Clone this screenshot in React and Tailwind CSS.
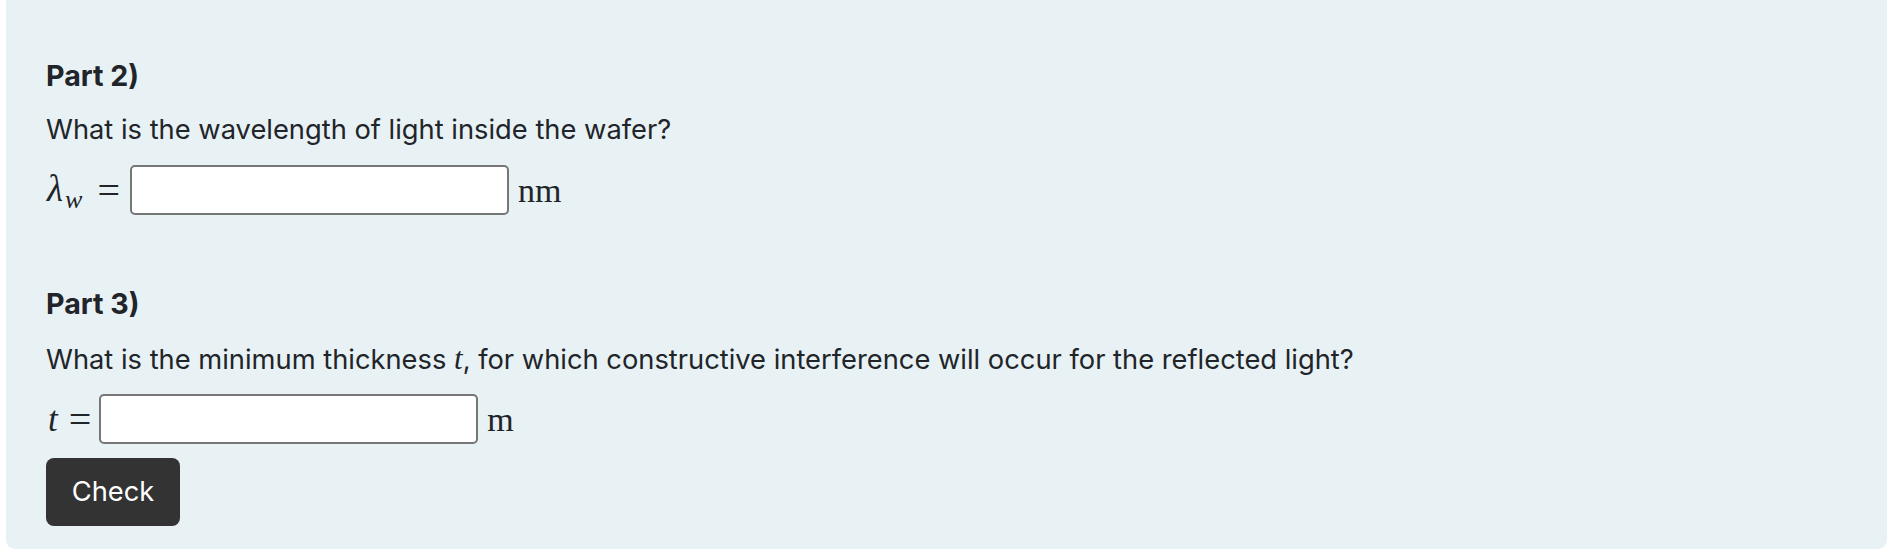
import React from 'react';

const math = "font-['Liberation_Serif',serif]";

function AnswerRow({ children, unit, className = '' }) {
    return (
        <div className={`flex items-center ${className}`}>
            {children}
            <input
                type="text"
                className="h-[50px] w-[379px] rounded-[5px] border-2 border-[#767676] bg-white px-3 text-[28px] outline-none"
            />
            <span className={`${math} ml-[9px] pt-[1px] text-[34px] text-[#212529]`}>{unit}</span>
        </div>
    );
}

export default function App() {
    return (
        <div className="min-h-screen bg-white px-[6px] pr-[7px]">
            <div className="rounded-b-[9px] bg-[#e8f1f4] px-[40px] pb-[23px] pt-[55px] font-['Inter',sans-serif] text-[27.3px] leading-[42px] text-[#212529]">
                {/* Part 2 */}
                <h3 className="text-[28.6px] font-bold">Part 2)</h3>
                <p className="mt-[12px]">What is the wavelength of light inside the wafer?</p>
                <AnswerRow unit="nm" className="mt-[14px]">
                    <span className={`${math} flex items-baseline pt-[2px] text-[37px]`}>
                        <i className="pl-[1px]">λ</i>
                        <i className="relative top-[7px] ml-[2px] text-[26px]">w</i>
                    </span>
                    <span className={`${math} ml-[15px] mr-[10px] pt-[2px] text-[40px]`}>=</span>
                </AnswerRow>

                {/* Part 3 */}
                <h3 className="mt-[68px] text-[28.6px] font-bold">Part 3)</h3>
                <p className="mt-[13px]">
                    What is the minimum thickness <i className={`${math} text-[31px]`}>t</i>, for which constructive interference will occur for the reflected light?
                </p>
                <AnswerRow unit="m" className="mt-[13px]">
                    <i className={`${math} pl-[2px] pt-[2px] text-[35px]`}>t</i>
                    <span className={`${math} ml-[11px] mr-[8px] pt-[2px] text-[40px]`}>=</span>
                </AnswerRow>

                <button className="mt-[14px] h-[68px] w-[134px] rounded-[8px] bg-[#333333] text-[27.3px] text-white">
                    Check
                </button>
            </div>
        </div>
    );
}
